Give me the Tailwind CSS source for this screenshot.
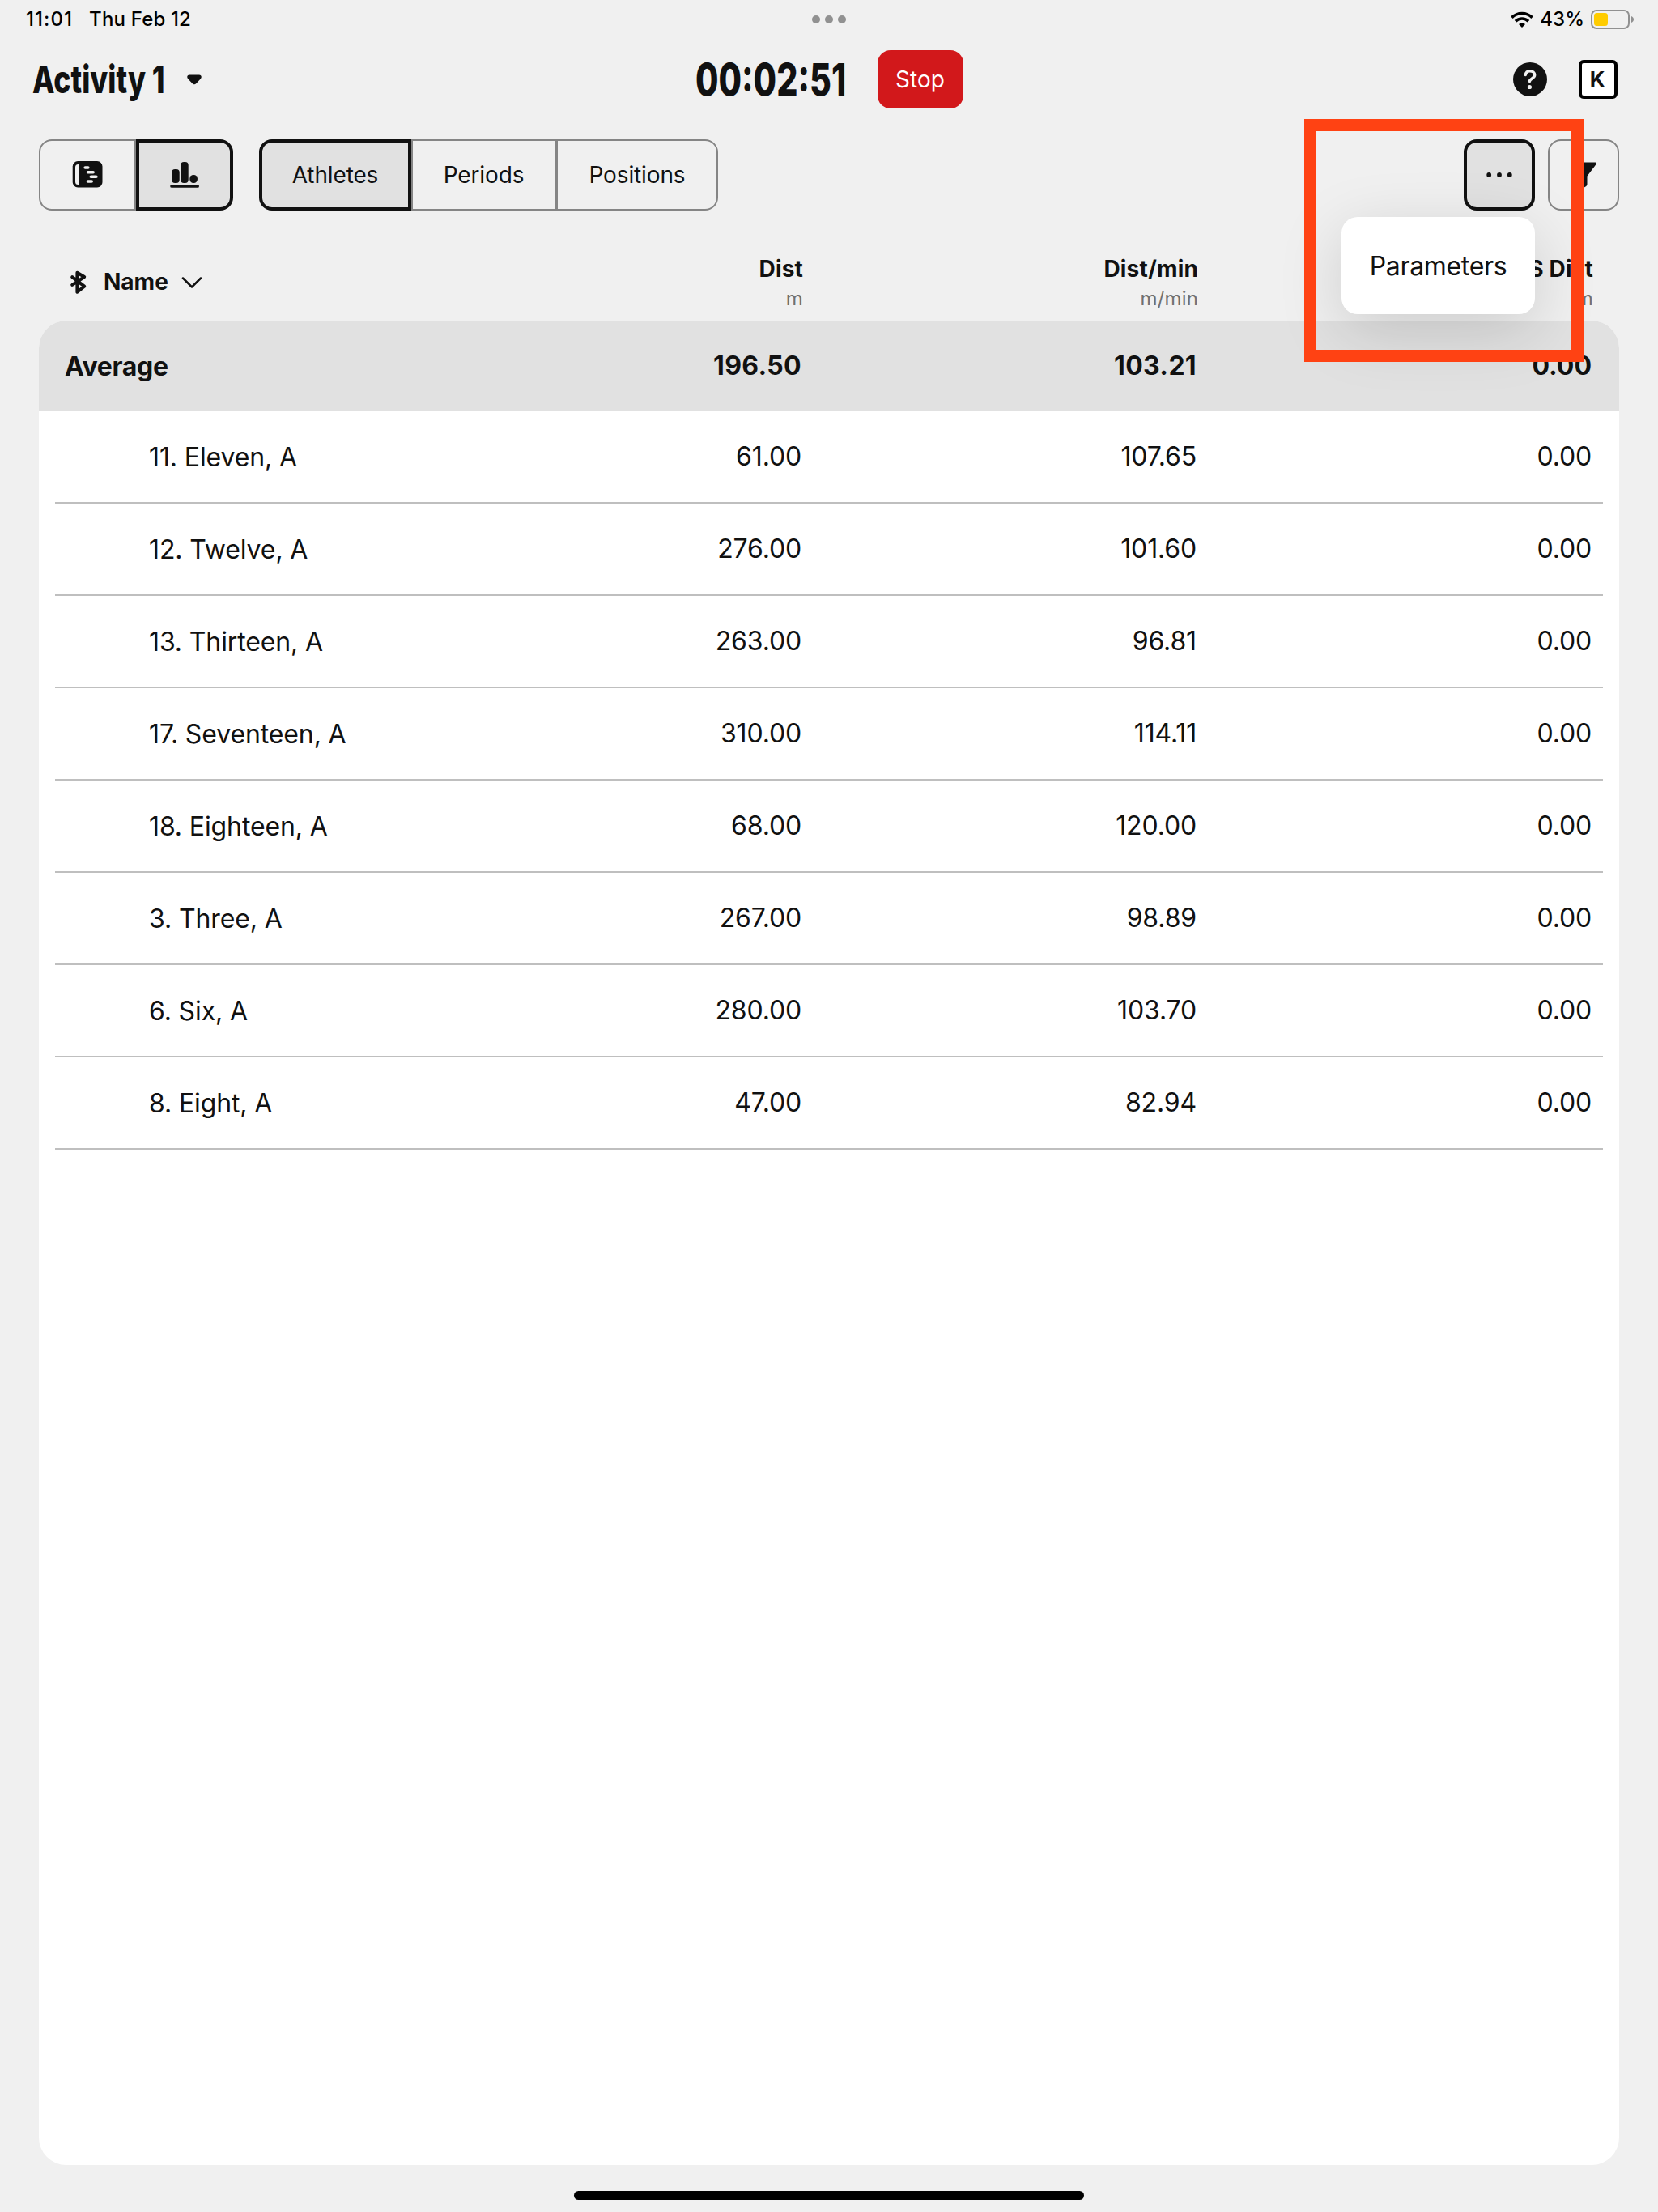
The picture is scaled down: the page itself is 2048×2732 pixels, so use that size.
<!DOCTYPE html>
<html lang="en">
<head>
  <meta charset="UTF-8" />
  <meta name="viewport" content="width=device-width, initial-scale=1.0" />
  <title>Activity 1</title>
  <script src="https://cdn.jsdelivr.net/npm/@tailwindcss/browser@4"></script>
</head>
<body class="relative w-[2048px] h-[2732px] overflow-hidden flex flex-col bg-[#f0f0f0] text-[#111] font-['Inter',sans-serif]">

  <!-- Status bar -->
  <div class="grid grid-cols-[1fr_auto_1fr] items-center h-12 px-[30px] text-[24px] font-medium text-black leading-none">
    <div class="flex gap-5 pl-0.5">
      <span class="tracking-[1.08px]">11:01</span>
      <span class="tracking-[0.17px]">Thu Feb 12</span>
    </div>
    <div class="flex gap-1.5">
      <span class="size-2.5 rounded-full bg-[#919191]"></span>
      <span class="size-2.5 rounded-full bg-[#919191]"></span>
      <span class="size-2.5 rounded-full bg-[#919191]"></span>
    </div>
    <div class="flex items-center justify-end gap-2">
      <svg class="w-7 h-5" viewBox="0 0 28 20" fill="none" stroke="#000" stroke-width="3.6">
        <path d="M1.4 7.6a18 18 0 0 1 25.2 0" />
        <path d="M6 12.2a11.5 11.5 0 0 1 16 0" />
        <path d="M14 20l-4-4a5.6 5.6 0 0 1 8 0z" fill="#000" stroke="none" />
      </svg>
      <span>43%</span>
      <svg class="w-[53px] h-6" viewBox="0 0 53 24">
        <rect x="1" y="1" width="46" height="22" rx="6" fill="none" stroke="#919191" stroke-width="2" />
        <rect x="4" y="4" width="17" height="16" rx="3.5" fill="#ffcc00" />
        <path d="M50 8c4 1.500 4 6.500 0 8z" fill="#919191" />
      </svg>
    </div>
  </div>

  <!-- Title, timer, account -->
  <header class="grid grid-cols-[1fr_auto_1fr] items-center h-[100px] px-10">
    <button class="flex items-center">
      <span class="w-[191px] text-left"><span class="inline-block origin-left scale-x-[0.76] text-[47px] leading-[60px] font-extrabold whitespace-nowrap">Activity 1</span></span>
      <svg class="w-[18px] h-[13px]" viewBox="0 0 18 13" fill="#111">
        <path d="M3 .5h12c2.600 0 3.600 2.800 1.900 4.700l-5.700 6c-1.300 1.400-3.100 1.400-4.400 0l-5.700-6C-.6 3.300.4.5 3 .5z" />
      </svg>
    </button>
    <div class="flex items-center gap-9">
      <span class="w-[189px]"><span class="inline-block origin-left scale-x-[0.75] text-[55px] leading-[72px] font-extrabold whitespace-nowrap">00:02:51</span></span>
      <button class="w-[106px] h-[72px] rounded-2xl bg-[#d2181b] text-white text-[28px]">Stop</button>
    </div>
    <div class="flex items-center justify-end gap-[39px] pr-2.5">
      <svg class="size-[42px]" viewBox="0 0 42 42">
        <circle cx="21" cy="21" r="21" fill="#111" />
        <path d="M15.300 15.400c.6-3 2.800-4.600 5.500-4.600 3.300 0 5.800 2 5.800 5 0 4-6 4.200-6.200 7.600" fill="none" stroke="#f0f0f0" stroke-width="3.600" stroke-linecap="round" />
        <circle cx="20.400" cy="30.500" r="2.600" fill="#f0f0f0" />
      </svg>
      <div class="size-12 flex items-center justify-center rounded-md border-4 border-black bg-white text-[26px] font-bold leading-none pr-0.5">K</div>
    </div>
  </header>

  <!-- Toolbar -->
  <div class="flex items-center mt-6 mx-12 text-[28px] tracking-[-0.13px]">
    <div class="flex">
      <button class="w-[120px] h-[88px] flex items-center justify-center rounded-l-2xl border-2 border-[#858585]">
        <svg class="size-10" viewBox="0 0 40 40">
          <rect x="1.700" y="3" width="36.800" height="32.500" rx="6.500" fill="#111" />
          <path d="M10 7v25H8.500A3.500 3.500 0 0 1 5 28.500v-18A3.500 3.500 0 0 1 8.500 7z" fill="#f0f0f0" />
          <g stroke="#f0f0f0" stroke-width="3.600" stroke-linecap="round">
            <path d="M17.200 11h3.600" />
            <path d="M20.500 16.700h6.600" />
            <path d="M24.300 22.300h6.600" />
            <path d="M20.500 28h4.700" />
          </g>
        </svg>
      </button>
      <button class="w-[120px] h-[88px] flex items-center justify-center rounded-r-2xl border-4 border-[#111] bg-[#e1e1e1]">
        <svg class="size-10" viewBox="0 0 40 40" fill="#111">
          <rect x="4.200" y="13" width="9.500" height="17" rx="4" />
          <rect x="15.200" y="4" width="9.500" height="26" rx="4" />
          <rect x="26.400" y="20" width="9.500" height="10" rx="4.500" />
          <rect x="2.200" y="32" width="35.800" height="3.800" rx="1.900" />
        </svg>
      </button>
    </div>
    <div class="flex ml-8">
      <button class="w-[188px] h-[88px] rounded-l-2xl border-4 border-[#111] bg-[#e1e1e1]">Athletes</button>
      <button class="w-[179px] h-[88px] border-2 border-[#858585]">Periods</button>
      <button class="w-[200px] h-[88px] rounded-r-2xl border-2 border-[#858585]">Positions</button>
    </div>
    <div class="flex gap-4 ml-auto">
      <div class="relative">
        <button class="size-[88px] flex items-center justify-center rounded-2xl border-4 border-[#111] bg-[#e1e1e1]">
          <svg class="size-10" viewBox="0 0 40 40" fill="#111">
            <circle cx="7.200" cy="20" r="2.900" />
            <circle cx="20" cy="20" r="2.900" />
            <circle cx="32.800" cy="20" r="2.900" />
          </svg>
        </button>
        <div class="absolute z-10 top-full right-0 mt-2 w-[239px] h-[120px] pt-0.5 flex items-center justify-center rounded-[20px] bg-white text-[32px] tracking-[-0.33px] shadow-[0_20px_80px_rgba(0,0,0,0.15)]">Parameters</div>
      </div>
      <button class="size-[88px] flex items-center justify-center rounded-2xl border-2 border-[#858585]">
        <svg class="size-10" viewBox="0 0 40 40" fill="#111">
          <path d="M5.500 4.500h29c1.300 0 1.900 1.300 1.200 2.300L24.500 21.500v10c0 1-.4 1.800-1.200 2.400l-5 3.200c-1.300.8-2.800 0-2.800-1.500V21.500L4.300 6.800c-.7-1-.1-2.300 1.200-2.300z" />
        </svg>
      </button>
    </div>
  </div>

  <!-- Column headings -->
  <div class="flex items-start h-[136px] pt-[54px] mx-12 text-[28px] leading-9 font-bold">
    <div class="w-[456px] pl-9 mt-4 flex items-center">
      <svg class="w-6 h-8" viewBox="0 0 24 32" fill="none" stroke="#111" stroke-width="4" stroke-linecap="round" stroke-linejoin="round">
        <path d="M5.200 10.200l15 11.500-8.800 7V4.700l8.800 5.300-15 9.800" />
      </svg>
      <span class="ml-5">Name</span>
      <svg class="ml-4 mt-0.5 w-[26px] h-[14px]" viewBox="0 0 26 14" fill="none" stroke="#111" stroke-width="2.500" stroke-linecap="round" stroke-linejoin="round">
        <path d="M2 1.500l11 11 11-11" />
      </svg>
    </div>
    <div class="w-[488px] text-right tracking-[0.17px]">Dist<div class="pt-px text-[24px] font-normal text-[#707070]">m</div></div>
    <div class="w-[488px] text-right tracking-[0.17px]">Dist/min<div class="pt-px text-[24px] font-normal text-[#707070]">m/min</div></div>
    <div class="w-[488px] text-right tracking-[0.17px]">HS Dist<div class="pt-px text-[24px] font-normal text-[#707070]">m</div></div>
  </div>

  <!-- Athlete table -->
  <main class="flex-1 mx-12 rounded-[34px] overflow-hidden bg-white text-[32px]">
    <div class="flex items-center h-28 bg-[#e1e1e1] font-bold">
      <div class="w-[456px] pl-8 pt-0.5 tracking-[-0.3px]">Average</div>
      <div class="w-[488px] pr-0.5 text-right tracking-[0.33px]">196.50</div>
      <div class="w-[488px] pr-0.5 text-right tracking-[0.33px]">103.21</div>
      <div class="w-[488px] pr-0.5 text-right">0.00</div>
    </div>
    <div id="rows"></div>
  </main>

  <!-- Home indicator -->
  <div class="h-[58px] pt-8">
    <div class="w-[630px] h-[11px] mx-auto rounded-full bg-black"></div>
  </div>

  <!-- Callout frame around the menu -->
  <div class="absolute z-20 left-[1611px] top-[147px] w-[345px] h-[300px] border-[15px] border-[#ff4213]"></div>

  <script>
    const athletes = [
      ["11. Eleven, A", "61.00", "107.65", "0.00"],
      ["12. Twelve, A", "276.00", "101.60", "0.00"],
      ["13. Thirteen, A", "263.00", "96.81", "0.00"],
      ["17. Seventeen, A", "310.00", "114.11", "0.00"],
      ["18. Eighteen, A", "68.00", "120.00", "0.00"],
      ["3. Three, A", "267.00", "98.89", "0.00"],
      ["6. Six, A", "280.00", "103.70", "0.00"],
      ["8. Eight, A", "47.00", "82.94", "0.00"],
    ];

    document.getElementById("rows").innerHTML = athletes.map(([name, ...values]) => `
      <div class="flex items-center h-[114px] mx-5 border-b-2 border-[#bfbfbf]">
        <div class="w-[436px] pl-[116px] pt-0.5 tracking-[-0.12px] whitespace-nowrap">${name}</div>
        ${values.map(v => `<div class="w-[488px] pr-0.5 text-right tracking-[-0.15px]">${v}</div>`).join("")}
      </div>`).join("");
  </script>
</body>
</html>
